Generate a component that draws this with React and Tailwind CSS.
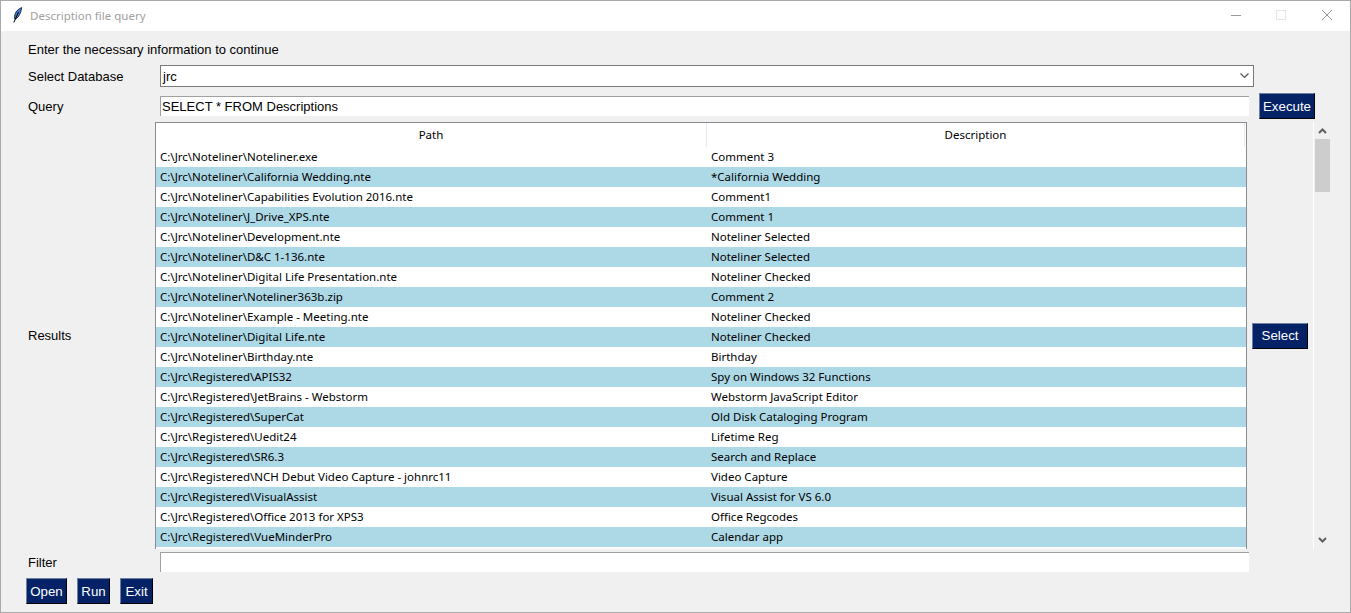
const rows = [
  ["C:\\Jrc\\Noteliner\\Noteliner.exe", "Comment 3"],
  ["C:\\Jrc\\Noteliner\\California Wedding.nte", "*California Wedding"],
  ["C:\\Jrc\\Noteliner\\Capabilities Evolution 2016.nte", "Comment1"],
  ["C:\\Jrc\\Noteliner\\J_Drive_XPS.nte", "Comment 1"],
  ["C:\\Jrc\\Noteliner\\Development.nte", "Noteliner Selected"],
  ["C:\\Jrc\\Noteliner\\D&C 1-136.nte", "Noteliner Selected"],
  ["C:\\Jrc\\Noteliner\\Digital Life Presentation.nte", "Noteliner Checked"],
  ["C:\\Jrc\\Noteliner\\Noteliner363b.zip", "Comment 2"],
  ["C:\\Jrc\\Noteliner\\Example - Meeting.nte", "Noteliner Checked"],
  ["C:\\Jrc\\Noteliner\\Digital Life.nte", "Noteliner Checked"],
  ["C:\\Jrc\\Noteliner\\Birthday.nte", "Birthday"],
  ["C:\\Jrc\\Registered\\APIS32", "Spy on Windows 32 Functions"],
  ["C:\\Jrc\\Registered\\JetBrains - Webstorm", "Webstorm JavaScript Editor"],
  ["C:\\Jrc\\Registered\\SuperCat", "Old Disk Cataloging Program"],
  ["C:\\Jrc\\Registered\\Uedit24", "Lifetime Reg"],
  ["C:\\Jrc\\Registered\\SR6.3", "Search and Replace"],
  ["C:\\Jrc\\Registered\\NCH Debut Video Capture - johnrc11", "Video Capture"],
  ["C:\\Jrc\\Registered\\VisualAssist", "Visual Assist for VS 6.0"],
  ["C:\\Jrc\\Registered\\Office 2013 for XPS3", "Office Regcodes"],
  ["C:\\Jrc\\Registered\\VueMinderPro", "Calendar app"],
];

const Btn = ({ children, className = "" }) => (
  <button className={`h-[26px] pt-[1px] bg-[#042265] text-white text-[13.3px] leading-none border border-[#000000] border-l-[#6f7f9f] border-t-[#6f7f9f] ${className}`}>
    {children}
  </button>
);

export default function App() {
  return (
    <div className="w-[1351px] h-[613px] overflow-hidden flex flex-col bg-[#f0f0f0] border border-[#a9a9a9] font-['Liberation_Sans',sans-serif] text-[13px] text-black">
      <div className="h-[30px] shrink-0 bg-white flex items-center pl-[12px]">
        <svg width="10" height="16" viewBox="0 0 10 16" className="mr-[7px] mb-[2px]">
          <path d="M8.7 0.5C5 2 2 5 1.6 9L1.6 12L3 12C6 10 8.2 5 8.7 0.5Z" fill="#3f78cc" stroke="#0b1a30" strokeWidth="0.8" />
          <path d="M5.5 5L0.8 15.5" stroke="#000" strokeWidth="1" fill="none" />
        </svg>
        <span className="text-[11.5px] text-[#a0a0a0] font-['Noto_Sans',sans-serif]">Description file query</span>
        <div className="ml-auto flex items-center mb-[2px]">
          <svg width="10" height="10" viewBox="0 0 10 10" className="mr-[35px]"><path d="M0 5.5H10" stroke="#9a9a9a" /></svg>
          <svg width="10" height="10" viewBox="0 0 10 10" className="mr-[36px]"><rect x="0.5" y="0.5" width="9" height="9" fill="none" stroke="#e6e6e6" /></svg>
          <svg width="10" height="10" viewBox="0 0 10 10" className="mr-[18px]"><path d="M0 0L10 10M10 0L0 10" stroke="#9a9a9a" /></svg>
        </div>
      </div>

      <div className="flex-1 flex flex-col pl-[25px] min-h-0">
        <div className="h-[20px] mt-[8px] pl-[2px] pt-[2px] flex items-center">Enter the necessary information to continue</div>

        <div className="flex items-center h-[22px] mt-[6px]">
          <span className="w-[134px] pl-[2px] pt-[1px]">Select Database</span>
          <div className="w-[1094px] h-[22px] bg-white border border-[#7a7a7a] flex items-center pl-[2px] justify-between pr-[4px]">
            <span className="pt-[1px]">jrc</span>
            <svg width="9" height="6" viewBox="0 0 9 6"><path d="M0.5 0.5L4.5 4.5L8.5 0.5" fill="none" stroke="#555" strokeWidth="1.2" /></svg>
          </div>
        </div>

        <div className="flex items-center h-[26px] mt-[6px]">
          <span className="w-[134px] pl-[2px] pt-[1px]">Query</span>
          <div className="w-[1089px] h-[20px] bg-white border-t border-l border-[#a0a0a0] flex items-center pl-[1px]">SELECT * FROM Descriptions</div>
          <Btn className="w-[56px] ml-[10px]">Execute</Btn>
        </div>

        <div className="flex h-[427px] shrink-0 mt-[3px]">
          <div className="w-[129px] flex items-center pl-[2px]">Results</div>
          <div className="w-[1092px] shrink-0 bg-white border border-b-0 border-[#8a8a94] overflow-hidden font-['Noto_Sans',sans-serif] text-[11.5px]">
            <div className="h-[24px] flex items-center">
              <div className="w-[551px] h-full flex items-center justify-center border-r border-[#e8e8e8]">Path</div>
              <div className="w-[538px] h-full flex items-center justify-center border-r border-[#e8e8e8]">Description</div>
            </div>
            {rows.map((r, i) => (
              <div key={i} className={`h-[20px] flex items-center ${i % 2 ? "bg-[#add8e6]" : "bg-white"}`}>
                <span className="w-[555px] pl-[4px] whitespace-nowrap">{r[0]}</span>
                <span className="whitespace-nowrap">{r[1]}</span>
              </div>
            ))}
          </div>
          <div className="w-[66px] shrink-0 flex items-center pl-[5px]"><Btn className="w-[56px]">Select</Btn></div>
          <div className="w-[17px] shrink-0 bg-[#f0f0f0] border-l border-white flex flex-col items-center">
            <svg width="9" height="6" viewBox="0 0 9 6" className="mt-[6px]"><path d="M1 5L4.5 1.5L8 5" fill="none" stroke="#606060" strokeWidth="2" /></svg>
            <div className="w-[15px] h-[53px] bg-[#cdcdcd] mt-[5px]" />
            <svg width="9" height="6" viewBox="0 0 9 6" className="mt-auto mb-[6px]"><path d="M1 1L4.5 4.5L8 1" fill="none" stroke="#606060" strokeWidth="2" /></svg>
          </div>
        </div>

        <div className="flex items-center h-[20px] shrink-0 mt-[3px]">
          <span className="w-[134px] pl-[2px] pt-[1px]">Filter</span>
          <div className="w-[1089px] h-[20px] bg-white border-t border-l border-[#a0a0a0]" />
        </div>

        <div className="flex gap-[10px] mt-[6px]">
          <Btn className="w-[41px]">Open</Btn>
          <Btn className="w-[33px]">Run</Btn>
          <Btn className="w-[33px]">Exit</Btn>
        </div>
      </div>
    </div>
  );
}
